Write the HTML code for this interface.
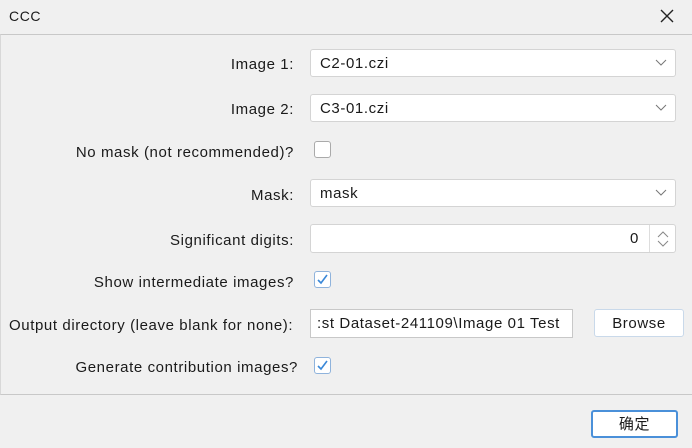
<!DOCTYPE html>
<html><head><meta charset="utf-8"><style>
*{margin:0;padding:0;box-sizing:border-box}
body{width:692px;height:448px;background:#f0f0f0;font-family:"Liberation Sans","Noto Sans CJK SC",sans-serif;font-size:15px;letter-spacing:0.6px;color:#1a1a1a;position:relative;overflow:hidden}
.a{position:absolute}
.panel{left:0;top:34px;width:692px;height:361px;border-top:1px solid #c8c8c8;border-left:1px solid #d8d8d8;border-bottom:1px solid #c8c8c8}
.lbl{position:absolute;right:398px;white-space:nowrap}
.box{position:absolute;background:#fff;border:1px solid #d4d4d4;border-radius:3px;padding-left:9px;line-height:28px}
.chev{position:absolute;right:8px;top:9px}
.cb{position:absolute;width:17px;height:17px;border:1px solid #aaa;border-radius:3px;background:#fff}
.cb.on{border-color:#8fb3dc;background:#fff}
.btn{position:absolute;background:#fff;border:1px solid #c9d9ea;border-radius:3px;text-align:center;line-height:28px}
</style></head><body>
<div class="a" style="left:9px;top:8px;font-size:14px">CCC</div>
<svg class="a" style="left:660px;top:9px" width="14" height="14" viewBox="0 0 14 14"><path d="M1 1L13 13M13 1L1 13" stroke="#222" stroke-width="1.4"/></svg>
<div class="a panel"></div>

<div class="lbl" style="top:56px">Image 1:</div>
<div class="box" style="left:310px;top:49px;width:366px;height:28px">C2-01.czi<svg class="chev" width="12" height="8"><path d="M1 1L6 6L11 1" stroke="#777" fill="none"/></svg></div>
<div class="lbl" style="top:101px">Image 2:</div>
<div class="box" style="left:310px;top:94px;width:366px;height:28px">C3-01.czi<svg class="chev" width="12" height="8"><path d="M1 1L6 6L11 1" stroke="#777" fill="none"/></svg></div>
<div class="lbl" style="top:144px">No mask (not recommended)?</div>
<div class="cb" style="left:314px;top:141px"></div>
<div class="lbl" style="top:187px">Mask:</div>
<div class="box" style="left:310px;top:179px;width:366px;height:28px">mask<svg class="chev" width="12" height="8"><path d="M1 1L6 6L11 1" stroke="#777" fill="none"/></svg></div>
<div class="lbl" style="top:232px">Significant digits:</div>
<div class="box" style="left:310px;top:224px;width:366px;height:29px;padding:0">
 <div class="a" style="right:36px;top:0">0</div>
 <div class="a" style="left:338px;top:0;width:1px;height:27px;background:#ddd"></div>
 <svg class="a" style="left:345px;top:6px" width="14" height="16"><path d="M2 6L7 1L12 6M2 10L7 15L12 10" stroke="#888" fill="none"/></svg>
</div>
<div class="lbl" style="top:274px">Show intermediate images?</div>
<div class="cb on" style="left:314px;top:271px"><svg width="15" height="15" style="position:absolute;left:0;top:0"><path d="M3 8L6 11L12 3" stroke="#3a88d8" stroke-width="1.6" fill="none"/></svg></div>
<div class="a" style="left:9px;top:317px">Output directory (leave blank for none):</div>
<div class="box" style="left:310px;top:309px;width:263px;height:29px;border-color:#c8c8c8;border-radius:0;padding-left:6px;overflow:hidden;white-space:nowrap">:st Dataset-241109\Image 01 Test</div>
<div class="btn" style="left:594px;top:309px;width:90px;height:28px">Browse</div>
<div class="lbl" style="top:359px;right:394px">Generate contribution images?</div>
<div class="cb on" style="left:314px;top:357px"><svg width="15" height="15" style="position:absolute;left:0;top:0"><path d="M3 8L6 11L12 3" stroke="#3a88d8" stroke-width="1.6" fill="none"/></svg></div>

<div class="btn" style="left:591px;top:410px;width:87px;height:28px;border:2px solid #4a90d9;line-height:25px">确定</div>
</body></html>
